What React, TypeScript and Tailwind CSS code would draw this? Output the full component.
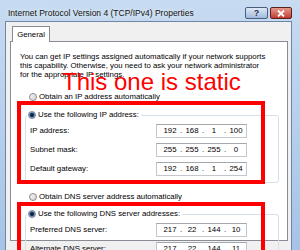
import React from "react";

type RadioProps = { checked?: boolean };

function Radio({ checked }: RadioProps) {
  return (
    <span className="flex h-[8px] w-[8px] shrink-0 items-center justify-center rounded-full border border-[#8b8b8b] bg-gradient-to-br from-[#f6f6f6] to-[#d4d4d4]">
      {checked && (
        <span className="h-[4px] w-[4px] rounded-full bg-[#10243f] shadow-[0_0_1px_1px_#4f7fb8]" />
      )}
    </span>
  );
}

function IpField({ parts }: { parts: string[] }) {
  return (
    <div className="flex h-[14px] w-[91px] items-center border border-[#c3c6cc] border-t-[#a3a7ae] bg-white pl-[4px] text-[7.8px] leading-none text-black">
      {parts.map((p, i) => (
        <React.Fragment key={i}>
          {i > 0 && <span className="w-[4px] text-center">.</span>}
          <span className="w-[18px] text-center">{p}</span>
        </React.Fragment>
      ))}
    </div>
  );
}

function Row({ label, parts }: { label: string; parts: string[] }) {
  return (
    <div className="flex items-center pl-[4px]">
      <span className="w-[126px] text-[7.8px] leading-none">{label}</span>
      <IpField parts={parts} />
    </div>
  );
}

function Group({ legend, children }: { legend: string; children: React.ReactNode }) {
  return (
    <fieldset className="ml-[14px] w-[254px] rounded-[3px] border border-[#d5dfe5] pb-[6px]">
      <legend className="ml-[1px] flex h-[10px] items-center gap-[2px] pl-[1px] pr-[2px] text-[7.8px] leading-none">
        <Radio checked />
        <span>{legend}</span>
      </legend>
      <div className="mt-[4px] flex flex-col gap-[5px]">{children}</div>
    </fieldset>
  );
}

export default function App() {
  return (
    <div className="relative h-[250px] w-[300px] overflow-hidden bg-gradient-to-b from-[#c7dbf1] to-[#a6c3e6] font-['Liberation_Sans',Arial,sans-serif] text-black">
      {/* Title bar */}
      <div className="flex h-[21px] items-start pl-[8px] pr-[8px]">
        <span className="mt-[8px] text-[8.5px] leading-[11px] text-[#111] [text-shadow:0_0_4px_#ffffff]">
          Internet Protocol Version 4 (TCP/IPv4) Properties
        </span>
        <div className="ml-auto mt-[7px] flex gap-[2px]">
          <div className="flex h-[12px] w-[23px] items-center justify-center rounded-[2px] border border-[#4a5f7d] bg-gradient-to-b from-[#dde9f6] to-[#9fbadc] text-[9px] font-bold leading-none text-[#1b2a40] [text-shadow:0_0_2px_#ffffff]">
            ?
          </div>
          <div className="flex h-[12px] w-[22px] items-center justify-center rounded-[2px] border border-[#5a211c] bg-gradient-to-b from-[#e4988c] to-[#c2392f]">
            <svg width="8" height="7" viewBox="0 0 8 7">
              <path d="M1 0.5 L7 6.5 M7 0.5 L1 6.5" stroke="#ffffff" strokeWidth="1.8" />
            </svg>
          </div>
        </div>
      </div>

      {/* Dialog body */}
      <div className="ml-[5px] mr-[8px] h-[229px] border border-b-0 border-[#6f86a6] bg-[#f0f0f0] pl-[4px] pr-[3px] pt-[4px]">
        <div className="relative z-10 -mb-[1px] ml-[2px] flex h-[16px] w-[38px] items-center justify-center border border-b-0 border-[#898c95] bg-white text-[7.8px] leading-none">
          General
        </div>
        <div className="h-[200px] border border-[#898c95] bg-white">
          <p className="pl-[9px] pt-[10px] text-[7.8px] leading-[9px] whitespace-nowrap">
            You can get IP settings assigned automatically if your network supports
            <br />
            this capability. Otherwise, you need to ask your network administrator
            <br />
            for the appropriate IP settings.
          </p>

          <div className="mt-[13px] flex h-[10px] items-center gap-[2px] pl-[18px] text-[7.8px] leading-none">
            <Radio />
            <span>Obtain an IP address automatically</span>
          </div>

          <div className="mt-[8px]">
            <Group legend="Use the following IP address:">
              <Row label="IP address:" parts={["192", "168", "1", "100"]} />
              <Row label="Subnet mask:" parts={["255", "255", "255", "0"]} />
              <Row label="Default gateway:" parts={["192", "168", "1", "254"]} />
            </Group>
          </div>

          <div className="mt-[9px] flex h-[10px] items-center gap-[2px] pl-[18px] text-[7.8px] leading-none">
            <Radio />
            <span>Obtain DNS server address automatically</span>
          </div>

          <div className="mt-[7px]">
            <Group legend="Use the following DNS server addresses:">
              <Row label="Preferred DNS server:" parts={["217", "22", "144", "10"]} />
              <Row label="Alternate DNS server:" parts={["217", "22", "144", "11"]} />
            </Group>
          </div>
        </div>
      </div>

      {/* Annotations */}
      <div className="absolute left-[62px] top-[70px] text-[24px] leading-[24px] text-[#ff0000]">
        This one is static
      </div>
      <div className="absolute left-[17px] top-[101px] h-[83px] w-[248px] border-4 border-[#ff0000]" />
      <div className="absolute left-[17px] top-[202px] h-[60px] w-[248px] border-4 border-[#ff0000]" />
    </div>
  );
}
